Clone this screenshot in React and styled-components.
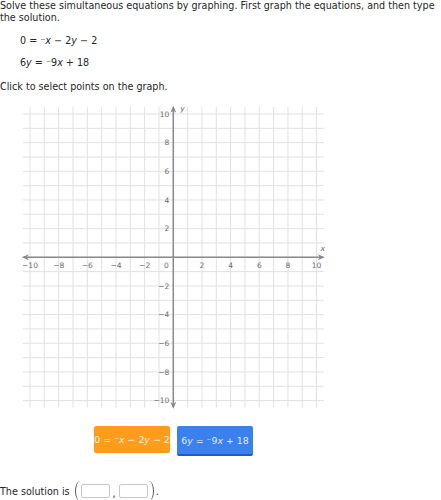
import React from 'react';
import styled, { createGlobalStyle } from 'styled-components';

const GlobalStyle = createGlobalStyle`
  body {
    margin: 0;
    background: #fff;
    color: #262626;
    font-family: "DejaVu Sans", Verdana, sans-serif;
    font-size: 9.6px;
  }
`;

const Page = styled.div`
  width: 441px;
`;

const Prompt = styled.p`
  margin: 0;
  line-height: 12px;
`;

const Equations = styled.div`
  padding-left: 20px;
  margin-top: 11px;
  display: flex;
  flex-direction: column;
  gap: 10px;
`;

const Equation = styled.div`
  line-height: 12px;
  white-space: nowrap;
`;

const Var = styled.i`
  font-style: italic;
`;

const Instruction = styled.p`
  margin: 12px 0 0;
  line-height: 12px;
`;

const GraphBox = styled.div`
  margin-top: 7px;
  width: 347px;
  height: 315px;
`;

const ButtonRow = styled.div`
  width: 347px;
  margin-top: 11px;
  display: flex;
  justify-content: center;
  align-items: flex-start;
  gap: 7px;
`;

const EqButton = styled.div`
  width: 76px;
  box-sizing: border-box;
  border-radius: 2px;
  display: flex;
  align-items: center;
  justify-content: center;
  white-space: nowrap;
  font-size: 9.4px;
  color: rgba(255, 255, 255, 0.9);
  background: ${(p) => (p.$tone === 'blue' ? '#3b80ec' : '#ff9d1b')};
  border-bottom: ${(p) => (p.$tone === 'blue' ? '2px solid #1c5cc6' : 'none')};
  height: ${(p) => (p.$tone === 'blue' ? '30px' : '27px')};
`;

const Solution = styled.div`
  margin-top: 22px;
  display: flex;
  align-items: center;
  white-space: nowrap;
  height: 26px;
`;

const Paren = styled.span`
  display: inline-block;
  width: 5px;
  height: 20px;
  box-sizing: border-box;
  border: 0 solid #555;
  ${(p) =>
    p.$side === 'left'
      ? 'border-left-width: 1.2px; border-radius: 100% 0 0 100% / 50% 0 0 50%; margin: 0 1px 0 5px;'
      : 'border-right-width: 1.2px; border-radius: 0 100% 100% 0 / 0 50% 50% 0; margin: 0 2px 0 1px;'}
`;

const Comma = styled.span`
  margin: 4px 3px 0;
`;

const AnswerBox = styled.span`
  display: inline-block;
  width: 27px;
  height: 12px;
  border: 1px solid #c8c8c8;
  border-radius: 2px;
  background: #fff;
`;

const U = 14.33;
const OX = 173.3;
const OY = 257.3;
const px = (v) => OX + v * U;
const py = (v) => OY - v * U;

const units = [];
for (let i = -10; i <= 10; i++) units.push(i);
const labels = [-10, -8, -6, -4, -2, 2, 4, 6, 8, 10];
const fmt = (v) => (v < 0 ? '\u2212' + Math.abs(v) : String(v));

function Graph() {
  const lo = -10.5;
  const hi = 10.5;
  return (
    <svg width="347" height="315" viewBox="0 100 347 315">
      {units.map((v) => (
        <g key={v} stroke="#e1e1e1" strokeWidth="1">
          <line x1={px(v)} x2={px(v)} y1={py(hi)} y2={py(lo)} />
          <line x1={px(lo)} x2={px(hi)} y1={py(v)} y2={py(v)} />
        </g>
      ))}
      <g stroke="#8a8a8a" strokeWidth="1.5">
        <line x1={px(lo) + 1} x2={px(hi) - 1} y1={OY} y2={OY} />
        <line x1={OX} x2={OX} y1={py(hi) + 1} y2={py(lo) - 1} />
      </g>
      <g fill="#8a8a8a">
        <path d={`M ${px(lo) - 1} ${OY} l 7 -3 l -2 3 l 2 3 z`} />
        <path d={`M ${px(hi) + 1} ${OY} l -7 -3 l 2 3 l -2 3 z`} />
        <path d={`M ${OX} ${py(hi) - 1} l -3 7 l 3 -2 l 3 2 z`} />
        <path d={`M ${OX} ${py(lo) + 1} l -3 -7 l 3 2 l 3 -2 z`} />
      </g>
      <g fill="#6b6b6b" fontFamily="DejaVu Sans, sans-serif" fontSize="7.5">
        {labels.map((v) => (
          <text key={'x' + v} x={px(v)} y={OY + 11} textAnchor="middle">
            {fmt(v)}
          </text>
        ))}
        {labels.map((v) => (
          <text key={'y' + v} x={OX - 4} y={py(v) + 2.7} textAnchor="end">
            {fmt(v)}
          </text>
        ))}
        <text x={OX - 7} y={OY + 11} textAnchor="middle">0</text>
        <text x={px(hi) - 1} y={OY - 6} fontStyle="italic" textAnchor="middle">x</text>
        <text x={OX + 7} y={py(hi) + 4} fontStyle="italic">y</text>
      </g>
    </svg>
  );
}

export default function App() {
  return (
    <Page>
      <GlobalStyle />
      <Prompt>
        Solve these simultaneous equations by graphing. First graph the equations, and then type
        the solution.
      </Prompt>
      <Equations>
        <Equation>
          0 = {'\u207B'}<Var>x</Var> {'\u2212'} 2<Var>y</Var> {'\u2212'} 2
        </Equation>
        <Equation>
          6<Var>y</Var> = {'\u207B'}9<Var>x</Var> + 18
        </Equation>
      </Equations>
      <Instruction>Click to select points on the graph.</Instruction>
      <GraphBox>
        <Graph />
      </GraphBox>
      <ButtonRow>
        <EqButton $tone="orange">
          0 = {'\u207B'}<Var>x</Var>&nbsp;{'\u2212'} 2<Var>y</Var>&nbsp;{'\u2212'} 2
        </EqButton>
        <EqButton $tone="blue">
          6<Var>y</Var>&nbsp;= {'\u207B'}9<Var>x</Var>&nbsp;+ 18
        </EqButton>
      </ButtonRow>
      <Solution>
        The solution is
        <Paren $side="left" />
        <AnswerBox />
        <Comma>,</Comma>
        <AnswerBox />
        <Paren $side="right" />
        .
      </Solution>
    </Page>
  );
}
